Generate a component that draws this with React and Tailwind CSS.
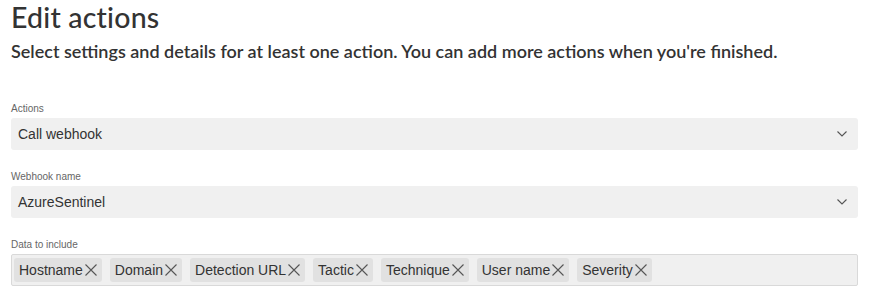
const tags = ["Hostname", "Domain", "Detection URL", "Tactic", "Technique", "User name", "Severity"];

function Chevron() {
  return (
    <svg width="10" height="6" viewBox="0 0 10 6" className="text-[#555]">
      <polyline points="0.5,0.5 5,5 9.5,0.5" fill="none" stroke="currentColor" strokeWidth="1.1" />
    </svg>
  );
}

function Cross() {
  return (
    <svg width="12" height="12" viewBox="0 0 12 12" className="ml-[2px] text-[#555]">
      <path d="M0.5 0.5L11.5 11.5M11.5 0.5L0.5 11.5" fill="none" stroke="currentColor" strokeWidth="1.1" />
    </svg>
  );
}

function Select({ label, value, className }) {
  return (
    <div className={className}>
      <div className="text-[10px] leading-[14px] text-[#666]">{label}</div>
      <div className="mt-[2px] flex h-8 items-center justify-between rounded-[3px] bg-[#f0f0f0] pl-[7px] pr-[11px] text-[14px] text-[#333]">
        <span>{value}</span>
        <Chevron />
      </div>
    </div>
  );
}

export default function App() {
  return (
    <div className="w-[895px] h-[308px] bg-white px-[11px]" style={{ fontFamily: '"Liberation Sans", Arial, sans-serif' }}>
      <h1 className="text-[28.5px] leading-[34px] font-medium tracking-[0.2px] text-[#333]" style={{ fontFamily: 'Lato, "Liberation Sans", sans-serif' }}>
        Edit actions
      </h1>
      <p className="mt-[6px] text-[18px] leading-[22px] font-semibold text-[#333]" style={{ fontFamily: 'Lato, "Liberation Sans", sans-serif' }}>
        Select settings and details for at least one action. You can add more actions when you're finished.
      </p>
      <div className="mt-[40px] w-[847px]">
        <Select label="Actions" value="Call webhook" />
        <Select className="mt-5" label="Webhook name" value="AzureSentinel" />
        <div className="mt-5">
          <div className="text-[10px] leading-[14px] text-[#666]">Data to include</div>
          <div className="mt-[2px] flex h-8 items-center gap-2 rounded-[2px] border border-[#d9d9d9] bg-[#f0f0f0] px-[2px]">
            {tags.map((t) => (
              <span key={t} className="flex h-6 items-center rounded-[3px] bg-[#e1e1e1] pl-[5px] pr-[5px] text-[14px] text-[#333]">
                {t}
                <Cross />
              </span>
            ))}
          </div>
        </div>
      </div>
    </div>
  );
}
